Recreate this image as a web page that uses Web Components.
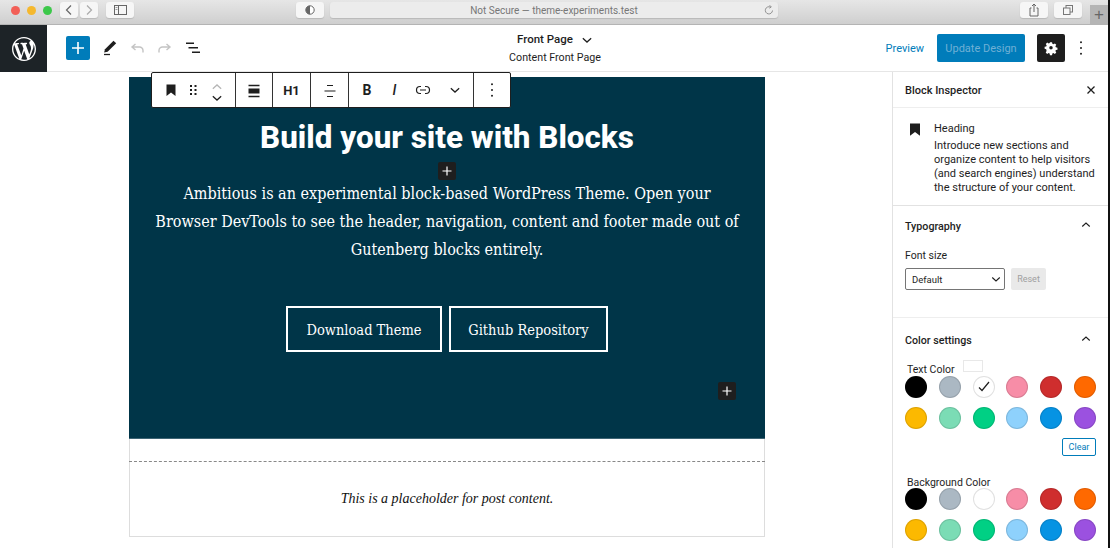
<!DOCTYPE html>
<html>
<head>
<meta charset="utf-8">
<style>
  html, body { margin: 0; padding: 0; background: #fff; }
  body { width: 1110px; height: 548px; overflow: hidden; font-family: Roboto, "Liberation Sans", sans-serif; }
  app-shell { width: 1110px; height: 548px; }
</style>
</head>
<body>
<app-shell>
  <safari-bar slot="top"></safari-bar>
  <editor-header slot="top"></editor-header>
  <site-canvas slot="main"></site-canvas>
  <block-sidebar slot="side"></block-sidebar>
</app-shell>

<script>
const sym = {
  plus: `<svg width="24" height="24" viewBox="0 0 24 24"><path d="M18 11.200h-5.200V6h-1.600v5.200H6v1.600h5.200V18h1.600v-5.200H18z" fill="currentColor"/></svg>`,
  chevDown: `<svg width="24" height="24" viewBox="0 0 24 24"><path d="M7 10l5 4.500 5-4.500" fill="none" stroke="currentColor" stroke-width="1.500"/></svg>`,
  chevUp: `<svg width="24" height="24" viewBox="0 0 24 24"><path d="M7 14l5-4.500 5 4.500" fill="none" stroke="currentColor" stroke-width="1.500"/></svg>`,
  more: `<svg width="24" height="24" viewBox="0 0 24 24"><path d="M12 7.200a1 1 0 1 0 0-2 1 1 0 0 0 0 2zm0 5.800a1 1 0 1 0 0-2 1 1 0 0 0 0 2zm0 5.800a1 1 0 1 0 0-2 1 1 0 0 0 0 2z" fill="currentColor"/></svg>`
};

const sized = (icon, s) => icon.replace('width="24" height="24"', `width="${s}" height="${s}"`);

class AppShell extends HTMLElement {
  constructor() {
    super();
    this.attachShadow({ mode: "open" });
    this.shadowRoot.innerHTML = `
      <style>
        :host { display: flex; overflow: hidden; }
        .col { flex: 1; min-width: 0; display: flex; flex-direction: column; }
        .body { display: flex; flex: 1; min-height: 0; }
        .main { flex: 1; min-width: 0; }
        .strip { width: 2px; background: #111; }
      </style>
      <div class="col">
        <slot name="top"></slot>
        <div class="body">
          <div class="main"><slot name="main"></slot></div>
          <slot name="side"></slot>
        </div>
      </div>
      <div class="strip"></div>`;
  }
}

class SafariBar extends HTMLElement {
  constructor() {
    super();
    this.attachShadow({ mode: "open" });
    this.shadowRoot.innerHTML = `
      <style>
        :host { display: flex; align-items: center; height: 25px; box-sizing: border-box; padding: 0 0 4px 11px; position: relative;
          background: linear-gradient(#e6e6e6, #cfcfcf); border-bottom: 1px solid #b4b4b4; }
        .dot { width: 9px; height: 9px; border-radius: 50%; margin-right: 7px; }
        .btn { height: 16px; background: #f6f6f6; border-radius: 3px; box-shadow: 0 1px 1px #b9b9b9; display: flex; align-items: center; justify-content: center; color: #666; }
        .addr { width: 448px; height: 16px; margin-left: 6px; background: #ececec; border-radius: 3px; box-shadow: 0 1px 1px #b9b9b9;
          font: 10px Roboto, "Liberation Sans", sans-serif; color: #777; display: flex; align-items: center; justify-content: center; position: relative; }
        .addr svg { position: absolute; right: 3px; top: 2px; }
        .new { position: absolute; right: 0; top: 5px; width: 18px; height: 19px; background: #b5b5b5; color: #666; font: 300 17px/19px "Liberation Sans", sans-serif; text-align: center; }
        svg { display: block; }
      </style>
      <span class="dot" style="background:#f25f57"></span>
      <span class="dot" style="background:#f5b82e"></span>
      <span class="dot" style="background:#3cc84a;margin-right:8px"></span>
      <span class="btn" style="width:18px;margin-right:2px"><svg width="10" height="12" viewBox="0 0 10 12"><path d="M7 1.500L2.500 6 7 10.500" fill="none" stroke="#666" stroke-width="1.200"/></svg></span>
      <span class="btn" style="width:18px;margin-right:8px"><svg width="10" height="12" viewBox="0 0 10 12"><path d="M3 1.500L7.500 6 3 10.500" fill="none" stroke="#aaa" stroke-width="1.200"/></svg></span>
      <span class="btn" style="width:28px;margin-right:162px"><svg width="13" height="10" viewBox="0 0 13 10"><rect x=".5" y=".5" width="12" height="9" fill="none" stroke="#666"/><path d="M4.500 0v10" stroke="#666"/><path d="M1.500 2.500h2M1.500 4.500h2" stroke="#888" stroke-width=".8"/></svg></span>
      <span class="btn" style="width:28px"><svg width="10" height="10" viewBox="0 0 10 10"><circle cx="5" cy="5" r="4.200" fill="#fff" stroke="#666"/><path d="M5 .8a4.200 4.200 0 0 0 0 8.400z" fill="#666"/></svg></span>
      <span class="addr">Not Secure — theme-experiments.test
        <svg width="12" height="12" viewBox="0 0 12 12"><path d="M9.500 6.500a3.600 3.600 0 1 1-2-3.400" fill="none" stroke="#888" stroke-width=".9"/><path d="M6.600 1.200l1.700 1.800-1.900 1.200" fill="none" stroke="#888" stroke-width=".9"/></svg>
      </span>
      <span class="btn" style="width:28px;margin-left:242px"><svg width="10" height="14" viewBox="0 0 10 14"><path d="M2.500 5H1v8h8V5H7.500M5 9V1M3 3l2-2 2 2" fill="none" stroke="#666"/></svg></span>
      <span class="btn" style="width:28px;margin-left:6px"><svg width="10" height="10" viewBox="0 0 10 10"><rect x="3" y=".5" width="6.500" height="6.500" fill="none" stroke="#777"/><rect x=".5" y="3" width="6.500" height="6.500" fill="#f6f6f6" stroke="#777"/></svg></span>
      <span class="new">+</span>`;
  }
}

class EditorHeader extends HTMLElement {
  constructor() {
    super();
    this.attachShadow({ mode: "open" });
    this.shadowRoot.innerHTML = `
      <style>
        :host { display: flex; align-items: center; height: 47px; box-sizing: border-box; border-bottom: 1px solid #e6e6e6; background: #fff; position: relative; color: #1e1e1e; }
        .logo { width: 47px; height: 47px; margin-bottom: -1px; background: #1d2327; display: flex; align-items: center; justify-content: center; color: #fff; }
        .left { display: flex; align-items: center; margin-left: 19px; }
        .add { width: 24px; height: 24px; background: #007cba; color: #fff; border-radius: 2px; display: flex; margin-right: 7px; }
        .ic { width: 24px; height: 24px; margin-right: 4px; }
        .ic.off { color: #c4c4c4; }
        .center { position: absolute; left: 450px; width: 210px; top: 0; text-align: center; }
        .title { font-size: 11.500px; font-weight: 500; height: 15px; line-height: 15px; margin-top: 7px; display: flex; justify-content: center; align-items: center; gap: 4px; padding-left: 1px; }
        .title svg { margin: 0 -3px 0 0; width: 20px; height: 20px; }
        .sub { font-size: 10.700px; line-height: 14px; margin-top: 4px; }
        .right { margin-left: auto; display: flex; align-items: center; }
        .preview { color: #007cba; font-size: 11px; margin-right: 13px; }
        .update { width: 88px; height: 28px; background: #007cba; color: #6fb0d5; border-radius: 2px; font-size: 11px; line-height: 29px; text-align: center; margin-right: 12px; }
        .gear { width: 28px; height: 28px; background: #1e1e1e; border-radius: 2px; color: #fff; display: flex; align-items: center; justify-content: center; margin-right: 7px; }
        .dots { width: 18px; height: 24px; margin-right: 18px; }
        svg { display: block; }
      </style>
      <div class="logo"><svg width="24" height="24" viewBox="0 0 20 20"><path fill="currentColor" d="M20 10c0-5.510-4.490-10-10-10C4.480 0 0 4.490 0 10c0 5.520 4.480 10 10 10 5.510 0 10-4.480 10-10zM7.780 15.370L4.370 6.220c.55-.02 1.170-.08 1.170-.08.5-.06.44-1.130-.06-1.110 0 0-1.450.11-2.370.11-.18 0-.37 0-.58-.01C4.120 2.690 6.870 1.110 10 1.110c2.330 0 4.450.87 6.050 2.340-.68-.11-1.650.39-1.650 1.580 0 .74.45 1.360.9 2.100.35.61.55 1.360.55 2.460 0 1.490-1.400 5-1.400 5l-3.030-8.370c.54-.02.82-.17.82-.17.5-.05.44-1.250-.06-1.220 0 0-1.440.12-2.380.12-.87 0-2.330-.12-2.330-.12-.5-.03-.56 1.200-.06 1.220l.92.08 1.260 3.410zM17.410 10c.24-.64.74-1.870.43-4.250.7 1.290 1.050 2.710 1.050 4.250 0 3.290-1.730 6.240-4.400 7.780.97-2.590 1.940-5.200 2.920-7.780zM6.100 18.090C3.120 16.650 1.110 13.530 1.110 10c0-1.300.23-2.480.72-3.590C3.250 10.300 4.670 14.200 6.100 18.090zm4.030-6.630l2.580 6.980c-.86.29-1.760.45-2.710.45-.79 0-1.570-.11-2.290-.33.81-2.380 1.620-4.740 2.420-7.100z"/></svg></div>
      <div class="left">
        <span class="add">${sym.plus}</span>
        <span class="ic"><svg width="24" height="24" viewBox="0 0 24 24"><path d="M8 13.300L16.500 4.800l2.700 2.500-8.600 8.400-3.500.7z" fill="#1e1e1e"/><path d="M7 18.500h6" stroke="#1e1e1e" stroke-width="1.300"/></svg></span>
        <span class="ic off"><svg width="24" height="24" viewBox="0 0 24 24"><path d="M18 16.500v-2a3.500 3.500 0 0 0-3.500-3.500H7.500M10.500 8l-3.500 3 3.500 3" fill="none" stroke="currentColor" stroke-width="1.400"/></svg></span>
        <span class="ic off"><svg width="24" height="24" viewBox="0 0 24 24"><path d="M6 16.500v-2a3.500 3.500 0 0 1 3.500-3.500h7M13.500 8l3.500 3-3.500 3" fill="none" stroke="currentColor" stroke-width="1.400"/></svg></span>
        <span class="ic"><svg width="24" height="24" viewBox="0 0 24 24"><path d="M5 7h8M7.500 11.500H17M11 16h8" fill="none" stroke="#1e1e1e" stroke-width="1.500" transform="translate(0 .3)"/></svg></span>
      </div>
      <div class="center">
        <div class="title">Front Page ${sym.chevDown}</div>
        <div class="sub">Content Front Page</div>
      </div>
      <div class="right">
        <span class="preview">Preview</span>
        <span class="update">Update Design</span>
        <span class="gear"><svg width="16" height="16" viewBox="0 0 16 16"><path fill="currentColor" fill-rule="evenodd" d="M6.700 1h2.600l.4 2 1.300.6 1.800-1.100 1.800 1.800-1.100 1.800.6 1.300 2 .4v2.600l-2 .4-.6 1.300 1.100 1.800-1.800 1.800-1.800-1.100-1.300.6-.4 2H6.700l-.4-2-1.300-.6-1.800 1.100-1.800-1.800 1.100-1.800L2 9.700l-2-.4V6.700l2-.4.6-1.300L1.500 3.200l1.800-1.800 1.800 1.100 1.300-.6zM8 5.800a2.200 2.200 0 1 0 0 4.400 2.200 2.200 0 0 0 0-4.400z" transform="translate(1.600 1.400) scale(.8)"/></svg></span>
        <span class="dots">${sym.more.replace('width="24"', 'width="18"').replace('viewBox="0 0 24 24"', 'viewBox="3 0 18 24"')}</span>
      </div>`;
  }
}

class BlockToolbar extends HTMLElement {
  constructor() {
    super();
    this.attachShadow({ mode: "open" });
    this.shadowRoot.innerHTML = `
      <style>
        :host { display: flex; height: 36px; box-sizing: border-box; background: #fff; border: 1px solid #1e1e1e; border-radius: 2px; color: #1e1e1e; }
        .g { display: flex; align-items: center; justify-content: center; border-right: 1px solid #333; box-sizing: border-box; position: relative; }
        .g:last-child { border-right: 0; }
        .h { font: 700 13px Roboto, "Liberation Sans", sans-serif; }
        svg { display: block; }
        .stack { width: 20px; height: 34px; display: flex; flex-direction: column; justify-content: center; margin: 3px 0 0 2px; }
        .stack span { display: block; height: 11px; }
        .stack svg { margin-top: -4px; }
        .bi { font: 700 14px Roboto, "Liberation Sans", sans-serif; width: 28px; text-align: center; }
        .it { font: italic 500 14px Roboto, "Liberation Sans", sans-serif; width: 28px; text-align: center; margin-left: -5px; }
      </style>
      <div class="g" style="width:84px">
        <svg width="20" height="20" viewBox="2 2 20 20" style="margin-right:4px"><path d="M7.500 6.500h9v11.500L12 14.600 7.500 18z" fill="currentColor"/></svg>
        <svg width="16" height="16" viewBox="0 0 16 16" style="margin-right:4px"><g fill="#1e1e1e"><rect x="5" y="3" width="2" height="2"/><rect x="9.500" y="3" width="2" height="2"/><rect x="5" y="7" width="2" height="2"/><rect x="9.500" y="7" width="2" height="2"/><rect x="5" y="11" width="2" height="2"/><rect x="9.500" y="11" width="2" height="2"/></g></svg>
        <div class="stack"><span style="color:#b5b5b5">${sized(sym.chevUp, 20)}</span><span>${sized(sym.chevDown, 20)}</span></div>
      </div>
      <div class="g" style="width:37px"><svg width="20" height="20" viewBox="0 0 20 20" style="margin-top:2px"><path d="M4.500 4.500h11M4.500 15.500h11" stroke="#1e1e1e" stroke-width="1.400"/><rect x="4.500" y="7.500" width="11" height="5" fill="#1e1e1e"/></svg></div>
      <div class="g h" style="width:38px">H1</div>
      <div class="g" style="width:38px"><svg width="20" height="20" viewBox="0 0 20 20" style="margin-top:2px"><path d="M7 4.500h6M4.500 10h11M7 15.500h6" stroke="#1e1e1e" stroke-width="1.200"/></svg></div>
      <div class="g" style="width:125px;padding:0 4px;justify-content:space-between">
        <span class="bi">B</span><span class="it">I</span>
        <svg width="20" height="20" viewBox="0 0 20 20"><path d="M8 6.500H7a3.500 3.500 0 0 0 0 7h1M12 6.500h1a3.500 3.500 0 0 1 0 7h-1M7 10h6" fill="none" stroke="#1e1e1e" stroke-width="1.200"/></svg>
        <span style="width:28px;display:flex;justify-content:center;margin-left:4px">${sized(sym.chevDown, 20)}</span>
      </div>
      <div class="g" style="flex:1">${sym.more}</div>`;
  }
}

class InserterDot extends HTMLElement {
  constructor() {
    super();
    this.attachShadow({ mode: "open" });
    this.shadowRoot.innerHTML = `
      <style>
        :host { display: flex; position: absolute; width: 18px; height: 18px; background: #1e1e1e; border-radius: 2px; color: #fff; align-items: center; justify-content: center; }
        svg { display: block; }
      </style>
      ${sized(sym.plus, 18)}`;
  }
}

class OutlineButton extends HTMLElement {
  constructor() {
    super();
    this.attachShadow({ mode: "open" });
    this.shadowRoot.innerHTML = `
      <style>
        :host { display: block; box-sizing: border-box; height: 46px; border: 2px solid #fff; color: #fff; text-align: center; font: 14.500px/44px "DejaVu Serif Condensed", "DejaVu Serif", serif; }
      </style>
      <slot></slot>`;
  }
}

class SiteCanvas extends HTMLElement {
  constructor() {
    super();
    this.attachShadow({ mode: "open" });
    this.shadowRoot.innerHTML = `
      <style>
        :host { display: block; position: relative; height: 476px; padding: 5px 0 0 129px; box-sizing: border-box; }
        .wrap { width: 636px; position: relative; }
        .hero { background: #003548; height: 362px; box-sizing: border-box; padding-top: 43px; color: #fff; text-align: center; border-bottom: 1px solid #3d6474; }
        h1 { margin: 0; font: 800 31.350px/36px Roboto, sans-serif; }
        p { margin: 24px 0 0; font: 16px/28px "DejaVu Serif Condensed", "DejaVu Serif", serif; }
        .btns { display: flex; justify-content: center; gap: 7px; margin-top: 42px; }
        .post { height: 98px; box-sizing: border-box; border: 1px solid #ddd; border-width: 0 1px 1px; padding-top: 22px; }
        .dash { border-top: 1px dashed #888; margin: 0 -1px; text-align: center; padding-top: 27px; font: italic 14px/20px "Liberation Serif", serif; color: #111; }
        block-toolbar { position: absolute; left: 22px; top: -5px; width: 360px; }
        inserter-dot.a { left: 309px; top: 85px; }
        inserter-dot.b { left: 589px; top: 305px; }
      </style>
      <div class="wrap">
        <div class="hero">
          <h1>Build your site with Blocks</h1>
          <p>Ambitious is an experimental block-based WordPress Theme. Open your<br>Browser DevTools to see the header, navigation, content and footer made out of<br>Gutenberg blocks entirely.</p>
          <div class="btns">
            <outline-button style="width:156px">Download Theme</outline-button>
            <outline-button style="width:159px">Github Repository</outline-button>
          </div>
        </div>
        <div class="post"><div class="dash">This is a placeholder for post content.</div></div>
        <block-toolbar></block-toolbar>
        <inserter-dot class="a"></inserter-dot>
        <inserter-dot class="b"></inserter-dot>
      </div>`;
  }
}

class ColorGrid extends HTMLElement {
  constructor() {
    super();
    this.attachShadow({ mode: "open" });
    const cols = ["#000", "#abb8c3", "#fff", "#f78da7", "#cf2e2e", "#ff6900", "#fcb900", "#7bdcb5", "#00d084", "#8ed1fc", "#0693e3", "#9b51e0"];
    const checked = this.hasAttribute("checked");
    this.shadowRoot.innerHTML = `
      <style>
        :host { display: grid; grid-template-columns: repeat(6, 22px); gap: 9px 11.800px; }
        i { display: flex; align-items: center; justify-content: center; width: 22px; height: 22px; border-radius: 50%; box-sizing: border-box; box-shadow: inset 0 0 0 1px rgba(0,0,0,.12); }
        svg { display: block; }
      </style>
      ${cols.map((c, n) => `<i style="background:${c}">${n == 2 && checked ? `<svg width="16" height="16" viewBox="0 0 16 16"><path d="M3 8.500l3 3L13 3" fill="none" stroke="#1e1e1e" stroke-width="1.200"/></svg>` : ""}</i>`).join("")}`;
  }
}

class BlockSidebar extends HTMLElement {
  constructor() {
    super();
    this.attachShadow({ mode: "open" });
    this.shadowRoot.innerHTML = `
      <style>
        :host { display: block; width: 216px; box-sizing: border-box; border-left: 1px solid #e2e2e2; font-size: 11px; color: #1e1e1e; flex: none; height: 476px; overflow: hidden; }
        svg { display: block; }
        .head { height: 36px; box-sizing: border-box; border-bottom: 1px solid #eee; display: flex; align-items: center; justify-content: space-between; padding: 1px 9px 0 12px; font-weight: 500; }
        .card { height: 98px; box-sizing: border-box; border-bottom: 1px solid #e2e2e2; display: flex; padding: 14px 0 0 14px; }
        .card .ic { width: 27px; margin-top: -1px; }
        .card b { font-weight: 400; display: block; line-height: 14px; margin-bottom: 3px; }
        .card div div { line-height: 14px; }
        .panel { box-sizing: border-box; border-bottom: 1px solid #eee; padding: 12px 15px 0 12px; }
        .pt { display: flex; justify-content: space-between; align-items: center; font-weight: 500; font-size: 10.700px; height: 16px; }
        .pt svg { margin-right: -2px; margin-top: -3px; }
        .lab { margin-top: 15px; line-height: 14px; font-size: 10.500px; }
        .row { display: flex; margin-top: 5px; gap: 6px; }
        .sel { width: 100px; height: 22px; box-sizing: border-box; border: 1px solid #757575; border-radius: 2px; font-size: 9.500px; padding-left: 6px; display: flex; align-items: center; justify-content: space-between; }
        .sel svg { margin-right: -1px; }
        .reset { width: 35px; height: 22px; background: #e9e9e9; color: #a0a0a0; border-radius: 2px; font-size: 9px; line-height: 22px; text-align: center; }
        .cl { line-height: 14px; padding-left: 2px; position: relative; font-size: 10.500px; }
        .cl .sw { position: absolute; left: 58px; top: -3px; width: 20px; height: 12px; box-sizing: border-box; border: 1px solid #e8e8e8; background: #fff; }
        .clear { display: block; margin: 9px 0 0 auto; width: 34px; height: 18px; box-sizing: border-box; border: 1px solid #007cba; border-radius: 2px; color: #007cba; font-size: 9px; line-height: 16px; text-align: center; }
        .colors { width: 191px; }
      </style>
      <div class="head">Block Inspector <svg width="16" height="16" viewBox="0 0 16 16"><path d="M4.500 4.500l7 7M11.500 4.500l-7 7" stroke="#1e1e1e" stroke-width="1.300"/></svg></div>
      <div class="card">
        <div class="ic"><svg width="16" height="16" viewBox="4 4 16 16"><path d="M7 6.500h10v12.300L12 15l-5 3.800z" fill="#1e1e1e"/></svg></div>
        <div><b>Heading</b><div>Introduce new sections and<br>organize content to help visitors<br>(and search engines) understand<br>the structure of your content.</div></div>
      </div>
      <div class="panel" style="height:112px">
        <div class="pt">Typography ${sized(sym.chevUp, 18)}</div>
        <div class="lab">Font size</div>
        <div class="row"><span class="sel">Default ${sized(sym.chevDown, 18)}</span><span class="reset">Reset</span></div>
      </div>
      <div class="panel" style="border:0;padding-top:14px">
        <div class="pt">Color settings ${sized(sym.chevUp, 18)}</div>
        <div class="colors">
          <div class="cl" style="margin-top:15px;margin-bottom:-1px"><span>Text Color</span><span class="sw"></span></div>
          <color-grid checked></color-grid>
          <span class="clear">Clear</span>
          <div class="cl" style="margin-top:20px;margin-bottom:-2px">Background Color</div>
          <color-grid></color-grid>
        </div>
      </div>`;
  }
}

customElements.define("color-grid", ColorGrid);
customElements.define("outline-button", OutlineButton);
customElements.define("inserter-dot", InserterDot);
customElements.define("block-toolbar", BlockToolbar);
customElements.define("safari-bar", SafariBar);
customElements.define("editor-header", EditorHeader);
customElements.define("site-canvas", SiteCanvas);
customElements.define("block-sidebar", BlockSidebar);
customElements.define("app-shell", AppShell);
</script>
</body>
</html>
